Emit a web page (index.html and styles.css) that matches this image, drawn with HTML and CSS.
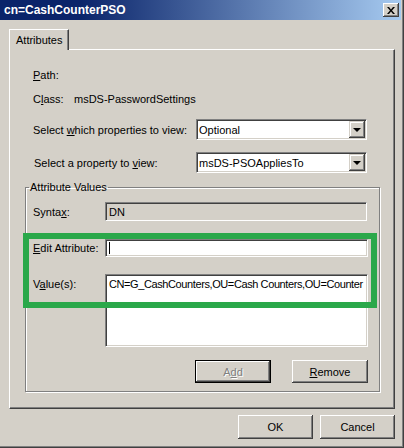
FILE: index.html
```html
<!DOCTYPE html>
<html>
  <head>
    <meta charset="utf-8" />
    <title>cn=CashCounterPSO</title>
    <link rel="stylesheet" href="styles.css">
  </head>

  <body>
    <div class="window">
      <!-- 타이틀바 -->
      <div class="titlebar">
        <span class="title">cn=CashCounterPSO</span>
        <span class="close">
          <svg width="8" height="7" viewBox="0 0 8 7">
            <path d="M0 0h2l2 2.5 2-2.5h2l-3 3.5 3 3.5h-2l-2-2.5-2 2.5h-2l3-3.5z" fill="#000" />
          </svg>
        </span>
      </div>

      <div class="content">
        <div class="tabs">
          <div class="tab">Attributes</div>
        </div>

        <div class="panel">
          <div class="row r-path">
            <span class="label"><u>P</u>ath:</span>
          </div>
          <div class="row r-class">
            <span class="label l-class">C<u>l</u>ass:</span>
            <span class="value">msDS-PasswordSettings</span>
          </div>
          <div class="row r-select">
            <span class="label l-select">Select <u>w</u>hich properties to view:</span>
            <div class="combo">
              <span class="combo-text">Optional</span>
              <span class="drop"><i class="arrow"></i></span>
            </div>
          </div>
          <div class="row r-select">
            <span class="label l-select l-shift">Select a property to <u>v</u>iew:</span>
            <div class="combo">
              <span class="combo-text">msDS-PSOAppliesTo</span>
              <span class="drop"><i class="arrow"></i></span>
            </div>
          </div>

          <!-- 그룹박스 -->
          <fieldset class="group">
            <legend>Attribute Values</legend>

            <div class="g-row r-syntax">
              <span class="label l-field">Synta<u>x</u>:</span>
              <div class="field readonly">DN</div>
            </div>

            <div class="hl-wrap">
              <div class="g-row r-edit">
                <span class="label l-field"><u>E</u>dit Attribute:</span>
                <div class="field edit"><i class="caret"></i></div>
              </div>
              <div class="g-row r-values">
                <span class="label l-field l-top">V<u>a</u>lue(s):</span>
                <div class="field listbox">CN=G_CashCounters,OU=Cash Counters,OU=Counter</div>
              </div>
              <div class="highlight"></div>
            </div>

            <div class="g-row r-buttons">
              <button class="btn default disabled">A<u>d</u>d</button>
              <button class="btn"><u>R</u>emove</button>
            </div>
          </fieldset>
        </div>

        <div class="footer">
          <button class="btn">OK</button>
          <button class="btn">Cancel</button>
        </div>
      </div>
    </div>
  </body>
</html>
```

FILE: styles.css
```css
body {
  margin: 0;
  font-family: "Liberation Sans", Arial, sans-serif;
  font-size: 11px;
  color: #000;
}

/* 창 */
.window {
  width: 404px;
  height: 448px;
  box-sizing: border-box;
  padding-right: 3px;
  background: #d4d0c8;
  box-shadow: inset -1px -1px 0 #404040, inset -2px -2px 0 #808080;
  overflow: hidden;
}

/* 타이틀바 */
.titlebar {
  height: 20px;
  display: flex;
  align-items: center;
  justify-content: space-between;
  padding: 0 2px 0 4px;
  background: linear-gradient(to right, #0a246a 20%, #a6caf0);
}

.title {
  color: #fff;
  font-weight: bold;
  font-size: 12px;
}

.close {
  width: 16px;
  height: 14px;
  display: flex;
  align-items: center;
  justify-content: center;
  background: #d4d0c8;
  box-shadow: inset -1px -1px 0 #404040, inset 1px 1px 0 #fff,
    inset -2px -2px 0 #808080;
}

/* 탭 */
.content {
  padding: 9px 0 0 9px;
}

.tabs {
  display: flex;
}

.tab {
  position: relative;
  z-index: 1;
  height: 20px;
  line-height: 20px;
  padding: 0 6px;
  margin-bottom: -1px;
  background: #d4d0c8;
  border-top: 1px solid #fff;
  border-left: 1px solid #fff;
  border-right: 1px solid #404040;
  box-shadow: inset -1px 0 0 #808080;
}

.panel {
  width: 386px;
  height: 360px;
  box-sizing: border-box;
  border-top: 1px solid #fff;
  border-left: 1px solid #fff;
  border-right: 1px solid #404040;
  border-bottom: 1px solid #404040;
  box-shadow: inset -1px -1px 0 #808080;
}

/* 행 */
.row {
  display: flex;
  align-items: center;
  padding-left: 23px;
}

.r-path {
  height: 16px;
  margin-top: 17px;
}

.r-class {
  height: 16px;
  margin-top: 8px;
}

.r-select {
  height: 21px;
  margin-top: 12px;
}

.l-class {
  width: 41px;
}

.l-select {
  width: 163px;
}

.l-shift {
  padding-left: 1px;
  width: 162px;
}

/* 콤보박스 */
.combo {
  width: 171px;
  height: 21px;
  box-sizing: border-box;
  display: flex;
  align-items: center;
  justify-content: space-between;
  background: #fff;
  border: 1px solid;
  border-color: #808080 #fff #fff #808080;
  box-shadow: inset 1px 1px 0 #404040, inset -1px -1px 0 #d4d0c8;
  padding: 1px 1px 1px 2px;
}

.drop {
  width: 16px;
  height: 17px;
  display: flex;
  align-items: center;
  justify-content: center;
  background: #d4d0c8;
  box-shadow: inset -1px -1px 0 #404040, inset 1px 1px 0 #d4d0c8,
    inset -2px -2px 0 #808080, inset 2px 2px 0 #fff;
}

.arrow {
  width: 0;
  height: 0;
  border-left: 4px solid transparent;
  border-right: 4px solid transparent;
  border-top: 4px solid #000;
}

/* 그룹박스 */
.group {
  width: 355px;
  box-sizing: border-box;
  margin: 8px 0 0 15px;
  padding: 8px 0 8px 7px;
  border: 1px solid #808080;
  box-shadow: 1px 1px 0 #fff, inset 1px 1px 0 #fff;
}

.group legend {
  padding: 0 1px;
  margin-left: -4px;
  line-height: 13px;
}

.g-row {
  display: flex;
  align-items: center;
}

.l-field {
  width: 72px;
  flex: none;
}

.l-top {
  align-self: flex-start;
  padding-top: 4px;
}

.field {
  width: 262px;
  box-sizing: border-box;
  border: 1px solid;
  border-color: #808080 #fff #fff #808080;
  box-shadow: inset 1px 1px 0 #404040, inset -1px -1px 0 #d4d0c8;
  padding: 2px 3px;
  background: #fff;
}

.readonly {
  height: 19px;
  line-height: 15px;
  background: #d4d0c8;
}

.r-edit {
  margin-top: 18px;
}

.edit {
  width: 263px;
  height: 18px;
  display: flex;
  align-items: center;
}

.caret {
  width: 1px;
  height: 12px;
  background: #000;
}

.r-values {
  margin-top: 17px;
}

.listbox {
  width: 263px;
  height: 73px;
  line-height: 15px;
  letter-spacing: -0.4px;
  white-space: nowrap;
  overflow: hidden;
}

/* 강조 테두리 */
.hl-wrap {
  position: relative;
}

.highlight {
  position: absolute;
  left: -10px;
  top: -6px;
  width: 354px;
  height: 75px;
  box-sizing: border-box;
  border: 6px solid #2aa84a;
}

/* 버튼 */
.r-buttons {
  justify-content: flex-end;
  gap: 21px;
  margin-top: 13px;
  padding-right: 11px;
}

.btn {
  width: 76px;
  height: 23px;
  margin: 0;
  padding: 0;
  border: none;
  font: inherit;
  color: #000;
  background: #d4d0c8;
  box-shadow: inset -1px -1px 0 #404040, inset 1px 1px 0 #fff,
    inset -2px -2px 0 #808080, inset 2px 2px 0 #d4d0c8;
}

.default {
  box-shadow: inset 0 0 0 1px #000, inset -2px -2px 0 #404040,
    inset 2px 2px 0 #fff, inset -3px -3px 0 #808080;
}

.disabled {
  color: #808080;
  text-shadow: 1px 1px 0 #fff;
}

.footer {
  display: flex;
  justify-content: flex-end;
  gap: 7px;
  margin-top: 6px;
  padding-right: 6px;
}

.footer .btn {
  width: 75px;
  height: 24px;
}
```
